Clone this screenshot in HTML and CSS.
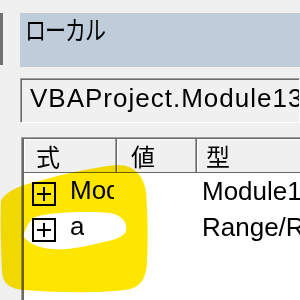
FILE: index.html
```html
<!DOCTYPE html>
<html lang="ja">
<head>
<meta charset="utf-8">
<title>ローカル</title>
<link rel="stylesheet" href="styles.css">
</head>
<body>
<div class="screen">
  <div class="side"><div class="side-bar"></div></div>
  <div class="main">
    <div class="caption"><span class="caption-text">ローカル</span></div>
    <div class="context">VBAProject.Module13.Test</div>
    <div class="list">
      <div class="list-inner">
        <div class="list-head">
          <div class="col col-expr">式</div>
          <div class="col col-val">値</div>
          <div class="col col-type">型</div>
        </div>
        <div class="list-body">
          <div class="row">
            <div class="cell cell-expr">
              <svg class="expander" viewBox="0 0 24 24" width="24" height="24"><rect x="1" y="1" width="22" height="22" fill="none" stroke="#000" stroke-width="2"/><path d="M5 12H19M12 5V19" stroke="#000" stroke-width="2" fill="none"/></svg>
              <span class="name">Module13</span>
            </div>
            <div class="cell cell-val"></div>
            <div class="cell cell-type">Module13/Module13</div>
          </div>
          <div class="row">
            <div class="cell cell-expr">
              <svg class="expander" viewBox="0 0 24 24" width="24" height="24"><rect x="1" y="1" width="22" height="22" fill="none" stroke="#000" stroke-width="2"/><path d="M5 12H19M12 5V19" stroke="#000" stroke-width="2" fill="none"/></svg>
              <span class="name">a</span>
            </div>
            <div class="cell cell-val"></div>
            <div class="cell cell-type">Range/Range</div>
          </div>
        </div>
      </div>
    </div>
  </div>
  <svg class="highlight" viewBox="0 0 300 300" width="300" height="300"><path fill="#ffe600" fill-rule="evenodd" d="M1,200 C8,190 20,186 35,182 C60,175 90,168 116,165 C134,164 144,176 146,192 C148,215 148,245 147,262 C146,280 140,288 125,290 C100,293 60,293 25,290 C10,289 3,284 2,272 C1,250 0,220 1,200 Z M23,236 C26,228 29,219 38,216 C55,212 90,211 110,213 C122,215 128,223 126,231 C123,239 108,241 95,244 C80,248 65,250 52,249 C38,248 28,243 23,236 Z"/></svg>
</div>
</body>
</html>
```
FILE: styles.css
```css
html, body {
  margin: 0;
  padding: 0;
  background: #f0f0f0;
}
.screen {
  position: relative;
  width: 300px;
  height: 300px;
  overflow: hidden;
  display: flex;
  background: #f0f0f0;
  font-family: "Liberation Sans", Arial, sans-serif;
  color: #000;
}
.side {
  width: 20px;
  flex-shrink: 0;
}
.side-bar {
  width: 3px;
  height: 52px;
  margin-top: 13px;
  background: #707070;
}
.main {
  flex: 1;
  min-width: 0;
  display: flex;
  flex-direction: column;
  padding-top: 13px;
}
.caption {
  height: 54px;
  flex-shrink: 0;
  background: #bfcddb;
  padding: 4px 0 0 5px;
  box-sizing: border-box;
}
.caption-text {
  display: inline-block;
  font-family: "Noto Sans CJK JP", sans-serif;
  font-size: 21px;
  line-height: 24px;
  letter-spacing: -1px;
  transform: scaleY(1.25);
}
.context {
  margin-top: 11px;
  height: 45px;
  flex-shrink: 0;
  box-sizing: border-box;
  border-top: 1px solid #a0a0a0;
  border-left: 1px solid #a0a0a0;
  border-right: 1px solid #ffffff;
  border-bottom: 1px solid #ffffff;
  box-shadow: inset 1px 1px 0 #696969;
  padding: 1px 0 0 9px;
  font-size: 26px;
  line-height: 36px;
  letter-spacing: 1px;
  white-space: nowrap;
  overflow: hidden;
}
.list {
  margin: 14px 0 0 1px;
  flex: 1;
  border-top: 1px solid #a0a0a0;
  border-left: 1px solid #a0a0a0;
  display: flex;
  flex-direction: column;
}
.list-inner {
  flex: 1;
  border-top: 1px solid #696969;
  border-left: 2px solid #696969;
  display: flex;
  flex-direction: column;
}
.list-head {
  display: flex;
  height: 34px;
  box-sizing: border-box;
  border-bottom: 1px solid #696969;
  background: #f0f0f0;
  font-family: "Noto Sans CJK JP", sans-serif;
  font-size: 24px;
  line-height: 33px;
}
.col {
  box-sizing: border-box;
  white-space: nowrap;
  overflow: hidden;
  box-shadow: inset -1px 0 0 #696969, inset -2px 0 0 #a0a0a0, inset 1px 1px 0 #ffffff;
}
.col-expr {
  width: 93px;
  padding-left: 12px;
}
.col-val {
  width: 80px;
  padding-left: 14px;
}
.col-type {
  flex: 1;
  padding-left: 9px;
  box-shadow: inset 1px 1px 0 #ffffff;
}
.list-body {
  flex: 1;
  background: #ffffff;
  padding-top: 3px;
}
.row {
  display: flex;
  height: 36px;
}
.cell {
  flex-shrink: 0;
  overflow: hidden;
  white-space: nowrap;
  font-size: 26px;
  line-height: 28px;
}
.cell-expr {
  width: 93px;
  display: flex;
  align-items: center;
}
.expander {
  flex-shrink: 0;
  margin-left: 8px;
  display: block;
}
.name {
  flex-shrink: 0;
  margin-left: 14px;
  padding-bottom: 8px;
  max-width: 44px;
  overflow: hidden;
}
.cell-val {
  width: 80px;
}
.cell-type {
  flex: 1;
  padding-left: 5px;
  padding-top: 1px;
}
.highlight {
  position: absolute;
  left: 0;
  top: 0;
  mix-blend-mode: multiply;
  pointer-events: none;
}
```
